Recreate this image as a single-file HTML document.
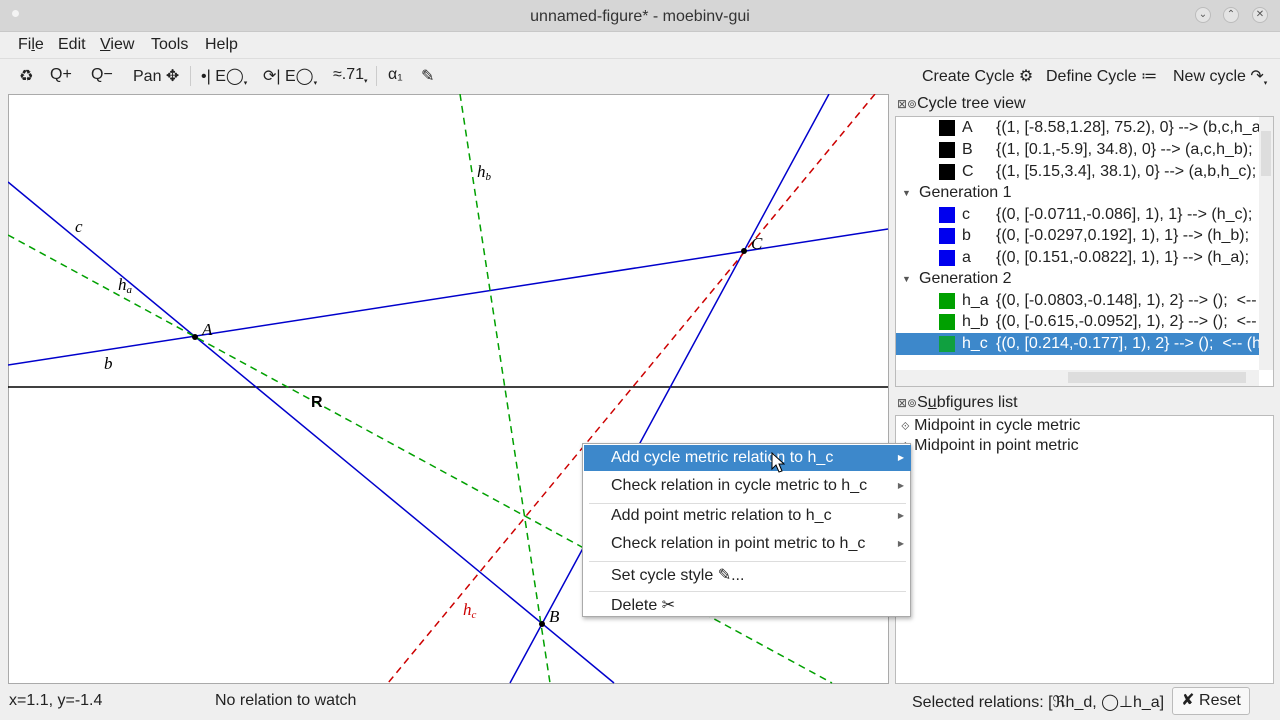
<!DOCTYPE html>
<html><head><meta charset="utf-8"><style>
*{margin:0;padding:0;box-sizing:border-box}
body{width:1280px;height:720px;background:#efefef;font-family:"Liberation Sans","DejaVu Sans",sans-serif;font-size:16px;color:#222;position:relative;overflow:hidden}
.abs{position:absolute;white-space:nowrap}
#title{left:0;top:0;width:1280px;height:32px;background:#d6d6d6;border-bottom:1px solid #c8c8c8}
.wb{position:absolute;top:7px;width:16px;height:16px;border-radius:50%;background:#e4e4e4;border:1px solid #bcbcbc;font-size:10px;text-align:center;line-height:14px;color:#555}
#canvas{left:8px;top:94px;width:881px;height:590px;background:#fff;border:1px solid #aaa}
.panel{background:#fff;border:1px solid #bbb}
.row{position:absolute;left:0;height:22px;line-height:22px;font-size:16px}
.sw{position:absolute;width:16px;height:16px;top:3px}
#menu{left:582px;top:443px;width:329px;height:174px;background:#fff;border:1px solid #aaa;box-shadow:1px 2px 4px rgba(0,0,0,.3)}
.mi{position:absolute;left:28px;font-size:16px}
.arr{position:absolute;right:6px;font-size:8px;color:#666}
.sep{position:absolute;left:6px;right:4px;height:1px;background:#ddd}
.tb{position:absolute;top:66px;font-size:16px;white-space:nowrap}
</style></head><body>
<div id="title" class="abs">
<div class="abs" style="left:12px;top:10px;width:7px;height:7px;border-radius:50%;background:#f4f4f4"></div>
<div class="abs" style="left:0;width:1280px;top:8px;text-align:center;font-size:16px;color:#333">unnamed-figure* - moebinv-gui</div>
<div class="wb" style="left:1195px">⌄</div><div class="wb" style="left:1223px">⌃</div><div class="wb" style="left:1252px">✕</div>
</div>
<div class="tb" style="left:18px;top:36px">Fi<u>l</u>e</div>
<div class="tb" style="left:58px;top:36px">Edit</div>
<div class="tb" style="left:100px;top:36px"><u>V</u>iew</div>
<div class="tb" style="left:151px;top:36px">Tools</div>
<div class="tb" style="left:205px;top:36px">Help</div>
<div class="abs" style="left:0;top:58px;width:1280px;height:1px;background:#ddd"></div>
<div class="tb" style="left:19px">♻</div>
<div class="tb" style="left:50px">Q+</div>
<div class="tb" style="left:91px">Q−</div>
<div class="tb" style="left:133px">Pan ✥</div>
<div class="abs" style="left:190px;top:66px;width:1px;height:20px;background:#ccc"></div>
<div class="tb" style="left:201px">•| E◯<sub style="font-size:7px">▾</sub></div>
<div class="tb" style="left:263px">⟳| E◯<sub style="font-size:7px">▾</sub></div>
<div class="tb" style="left:333px">≈.71<sub style="font-size:7px">▾</sub></div>
<div class="abs" style="left:376px;top:66px;width:1px;height:20px;background:#ccc"></div>
<div class="tb" style="left:388px">α₁</div>
<div class="tb" style="left:421px">✎</div>
<div class="tb" style="left:922px">Create Cycle ⚙</div>
<div class="tb" style="left:1046px">Define Cycle ≔</div>
<div class="tb" style="left:1173px">New cycle ↷<sub style="font-size:7px">▾</sub></div>

<div id="canvas" class="abs">
<svg width="881" height="590" viewBox="8 94 881 590" style="position:absolute;left:-1px;top:-1px">
<line x1="8" y1="387" x2="888" y2="387" stroke="#000" stroke-width="1.5"/>
<line x1="8" y1="182" x2="614" y2="683" stroke="#0000cc" stroke-width="1.5"/>
<line x1="8" y1="365" x2="888" y2="229" stroke="#0000cc" stroke-width="1.5"/>
<line x1="510" y1="683" x2="829" y2="94" stroke="#0000cc" stroke-width="1.5"/>
<line x1="8" y1="235" x2="832" y2="683" stroke="#00a000" stroke-width="1.5" stroke-dasharray="7,5"/>
<line x1="460" y1="94" x2="550" y2="683" stroke="#00a000" stroke-width="1.5" stroke-dasharray="7,5"/>
<line x1="875" y1="94" x2="388" y2="683" stroke="#cc0000" stroke-width="1.5" stroke-dasharray="7,5"/>
<circle cx="195" cy="337" r="3" fill="#000"/><circle cx="542" cy="624" r="3" fill="#000"/><circle cx="744" cy="251" r="3" fill="#000"/>
<g font-family="Liberation Serif,serif" font-style="italic" font-size="17">
<text x="75" y="232">c</text><text x="118" y="290">h<tspan font-size="11" dy="3">a</tspan></text>
<text x="202" y="335">A</text><text x="104" y="369">b</text>
<text x="477" y="177">h<tspan font-size="11" dy="3">b</tspan></text>
<text x="751" y="249">C</text><text x="549" y="622">B</text>
<text x="463" y="615" fill="#cc0000">h<tspan font-size="11" dy="3">c</tspan></text>
</g>
<text x="311" y="407" font-family="Liberation Sans,sans-serif" font-weight="bold" font-size="16">R</text>
</svg>
</div>

<div class="abs" style="left:897px;top:95px;font-size:16px"><span style="font-size:12px;color:#555">⊠⊚</span>Cycle tree view</div>
<div class="abs panel" style="left:895px;top:116px;width:379px;height:271px;overflow:hidden">
<div style="position:absolute;left:0;top:0;width:363px;height:253px;overflow:hidden">
<div class="row" style="top:0"><div class="sw" style="left:43px;background:#000"></div><span class="abs" style="left:66px">A</span><span class="abs" style="left:100px">{(1, [-8.58,1.28], 75.2), 0} --&gt; (b,c,h_a</span></div>
<div class="row" style="top:22px"><div class="sw" style="left:43px;background:#000"></div><span class="abs" style="left:66px">B</span><span class="abs" style="left:100px">{(1, [0.1,-5.9], 34.8), 0} --&gt; (a,c,h_b);</span></div>
<div class="row" style="top:44px"><div class="sw" style="left:43px;background:#000"></div><span class="abs" style="left:66px">C</span><span class="abs" style="left:100px">{(1, [5.15,3.4], 38.1), 0} --&gt; (a,b,h_c);</span></div>
<div class="row" style="top:65px"><span class="abs" style="left:6px;font-size:9px;color:#555">▼</span><span class="abs" style="left:23px">Generation 1</span></div>
<div class="row" style="top:87px"><div class="sw" style="left:43px;background:#0000ee"></div><span class="abs" style="left:66px">c</span><span class="abs" style="left:100px">{(0, [-0.0711,-0.086], 1), 1} --&gt; (h_c);</span></div>
<div class="row" style="top:108px"><div class="sw" style="left:43px;background:#0000ee"></div><span class="abs" style="left:66px">b</span><span class="abs" style="left:100px">{(0, [-0.0297,0.192], 1), 1} --&gt; (h_b);</span></div>
<div class="row" style="top:130px"><div class="sw" style="left:43px;background:#0000ee"></div><span class="abs" style="left:66px">a</span><span class="abs" style="left:100px">{(0, [0.151,-0.0822], 1), 1} --&gt; (h_a);</span></div>
<div class="row" style="top:151px"><span class="abs" style="left:6px;font-size:9px;color:#555">▼</span><span class="abs" style="left:23px">Generation 2</span></div>
<div class="row" style="top:173px"><div class="sw" style="left:43px;background:#00a000"></div><span class="abs" style="left:66px">h_a</span><span class="abs" style="left:100px">{(0, [-0.0803,-0.148], 1), 2} --&gt; ();&nbsp; &lt;--</span></div>
<div class="row" style="top:194px"><div class="sw" style="left:43px;background:#00a000"></div><span class="abs" style="left:66px">h_b</span><span class="abs" style="left:100px">{(0, [-0.615,-0.0952], 1), 2} --&gt; ();&nbsp; &lt;--</span></div>
<div class="row" style="top:216px;width:363px;background:#3d88cb;color:#fff"><div class="sw" style="left:43px;background:#10a040"></div><span class="abs" style="left:66px">h_c</span><span class="abs" style="left:100px">{(0, [0.214,-0.177], 1), 2} --&gt; ();&nbsp; &lt;-- (h</span></div>
</div>
<div class="abs" style="right:0;top:0;width:14px;height:253px;background:#f0f0f0"><div style="position:absolute;top:14px;left:2px;width:10px;height:45px;background:#ddd"></div></div>
<div class="abs" style="left:0;top:253px;width:363px;height:16px;background:#f0f0f0"><div style="position:absolute;left:172px;top:2px;width:178px;height:11px;background:#ddd"></div></div>
</div>

<div class="abs" style="left:897px;top:394px;font-size:16px"><span style="font-size:12px;color:#555">⊠⊚</span>S<u>u</u>bfigures list</div>
<div class="abs panel" style="left:895px;top:415px;width:379px;height:269px">
<div class="abs" style="left:5px;top:1px"><span style="font-size:11px;color:#555">⟐</span> Midpoint in cycle metric</div>
<div class="abs" style="left:5px;top:21px"><span style="font-size:11px;color:#555">⟐</span> Midpoint in point metric</div>
</div>

<div id="menu" class="abs">
<div class="abs" style="left:1px;top:1px;width:327px;height:26px;background:#3d88cb"></div>
<div class="mi" style="top:5px;color:#fff">Add cycle metric relation to h_c</div><div class="arr" style="top:9px;color:#fff">▶</div>
<div class="mi" style="top:33px">Check relation in cycle metric to h_c</div><div class="arr" style="top:37px">▶</div>
<div class="sep" style="top:59px"></div>
<div class="mi" style="top:63px">Add point metric relation to h_c</div><div class="arr" style="top:67px">▶</div>
<div class="mi" style="top:91px">Check relation in point metric to h_c</div><div class="arr" style="top:95px">▶</div>
<div class="sep" style="top:117px"></div>
<div class="mi" style="top:121px">Set cycle style ✎...</div>
<div class="sep" style="top:147px"></div>
<div class="mi" style="top:151px">Delete ✂</div>
</div>
<svg class="abs" style="left:771px;top:452px" width="14" height="22"><path d="M1 1 L1 17 L5 13 L8 20 L11 19 L8 12 L13 12 Z" fill="#fff" stroke="#000" stroke-width="1"/></svg>

<div class="abs" style="left:9px;top:692px">x=1.1, y=-1.4</div>
<div class="abs" style="left:215px;top:692px">No relation to watch</div>
<div class="abs" style="left:912px;top:692px">Selected relations: [ℜh_d, ◯⊥h_a]</div>
<div class="abs" style="left:1172px;top:687px;width:78px;height:28px;border:1px solid #bbb;border-radius:3px;background:#f8f8f8;text-align:center;line-height:26px">✘ Reset</div>
</body></html>
